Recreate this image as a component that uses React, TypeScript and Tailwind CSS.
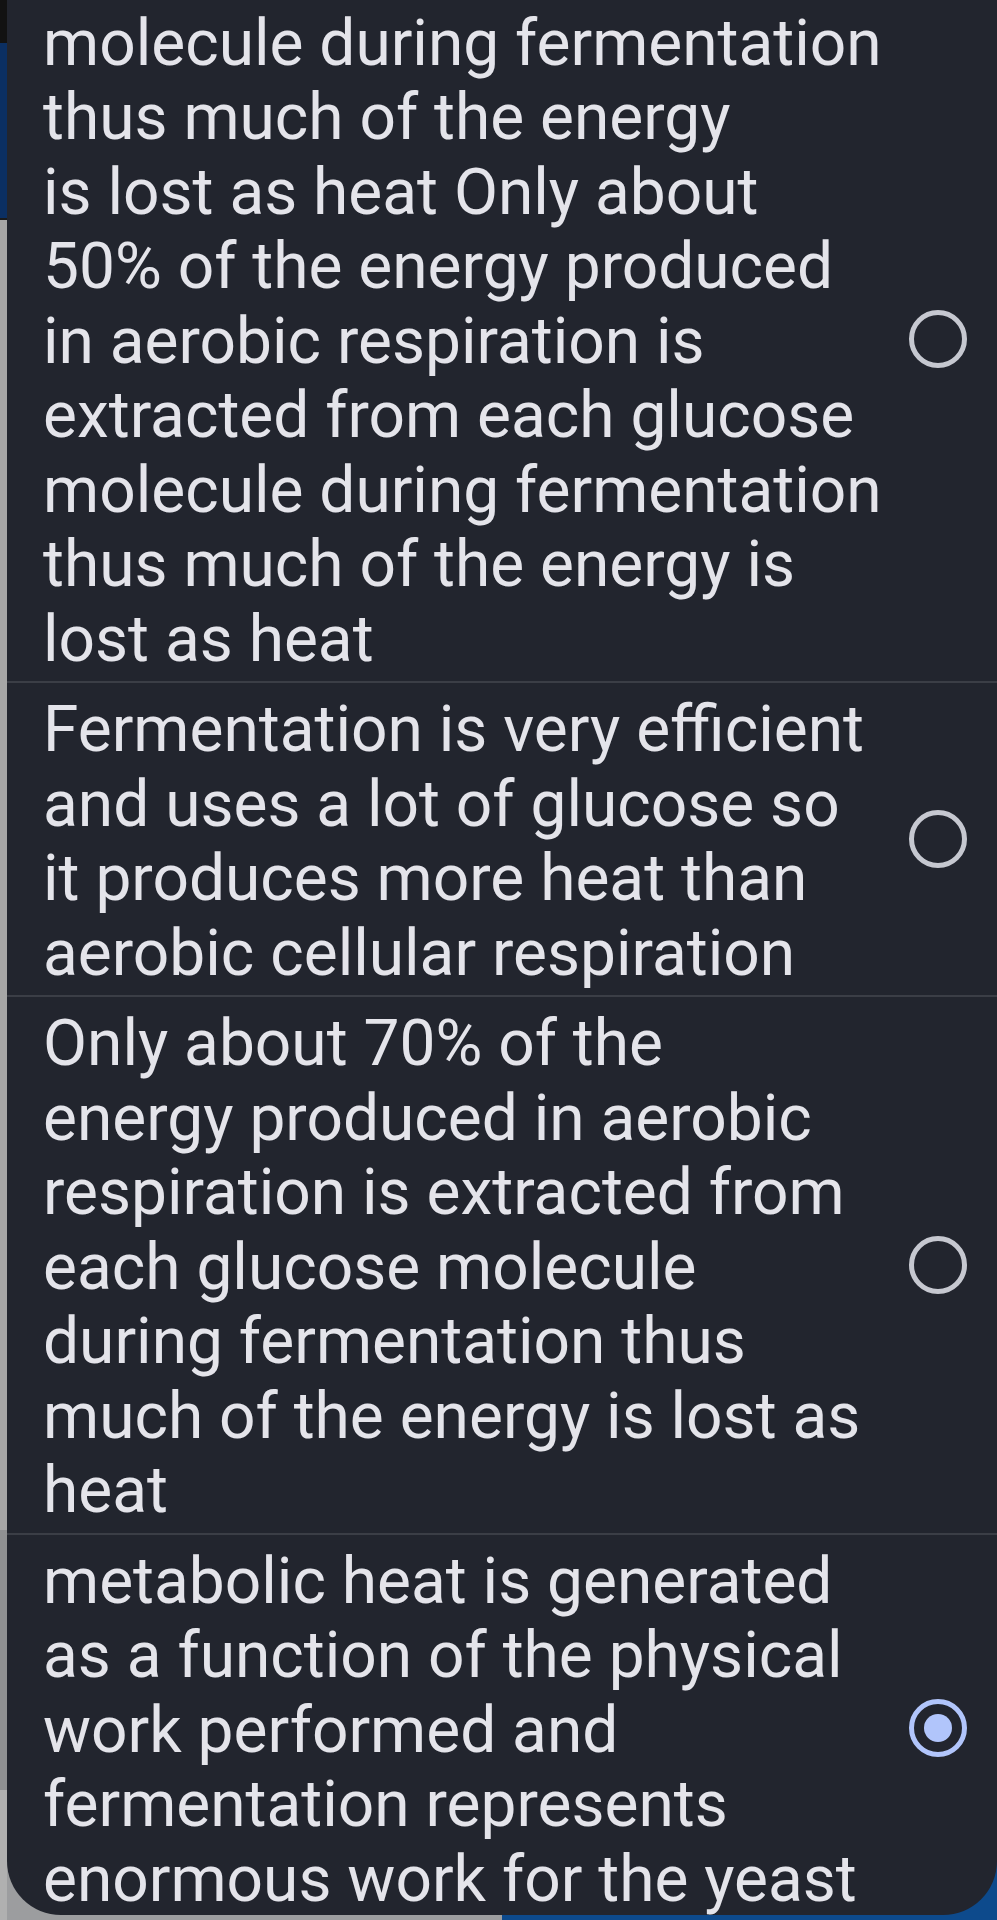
import React from "react";

// 選択肢の行（折り返しは元画像どおりに固定）
const options: { lines: string[]; selected?: boolean }[] = [
  {
    lines: [
      "molecule during fermentation",
      "thus much of the energy",
      "is lost as heat Only about",
      "50% of the energy produced",
      "in aerobic respiration is",
      "extracted from each glucose",
      "molecule during fermentation",
      "thus much of the energy is",
      "lost as heat",
    ],
  },
  {
    lines: [
      "Fermentation is very efficient",
      "and uses a lot of glucose so",
      "it produces more heat than",
      "aerobic cellular respiration",
    ],
  },
  {
    lines: [
      "Only about 70% of the",
      "energy produced in aerobic",
      "respiration is extracted from",
      "each glucose molecule",
      "during fermentation thus",
      "much of the energy is lost as",
      "heat",
    ],
  },
  {
    lines: [
      "metabolic heat is generated",
      "as a function of the physical",
      "work performed and",
      "fermentation represents",
      "enormous work for the yeast",
    ],
    selected: true,
  },
];

function Radio({ selected }: { selected?: boolean }) {
  if (selected) {
    return (
      <div className="flex h-[58px] w-[58px] shrink-0 items-center justify-center rounded-full border-[5px] border-[#b1c5fb]">
        <div className="h-[28px] w-[28px] rounded-full bg-[#b1c5fb]" />
      </div>
    );
  }
  return <div className="h-[58px] w-[58px] shrink-0 rounded-full border-[5px] border-[#c6c8d0]" />;
}

export default function App() {
  return (
    <div className="flex h-[1920px] w-full overflow-hidden bg-[#9c9d9f] font-['Roboto','Noto_Sans',sans-serif]">
      {/* 左端にのぞく背景 */}
      <div className="flex w-[7px] shrink-0 flex-col">
        <div className="h-[43px] bg-[#121212]" />
        <div className="h-[175px] bg-[#0b2f62]" />
        <div className="h-[2px] bg-[#1a1a1a]" />
        <div className="h-[1310px] bg-[#a6a6a6]" />
        <div className="h-[260px] bg-[#8f9092]" />
        <div className="flex-1 bg-[#b0b0b0]" />
      </div>

      <div className="flex flex-1 flex-col bg-[linear-gradient(to_right,#9c9d9f_50%,#0d4a8c_50%)]">
        <div className="h-[1915px] overflow-hidden rounded-b-[54px] bg-[#22252e]">
          <div className="-mt-[3.5px]">
            {options.map((opt, i) => (
              <div
                key={i}
                className={`flex items-center pl-[36px] pr-[30px] ${i > 0 ? "border-t-2 border-[#3b3e46]" : ""}`}
              >
                <div className="flex-1 pt-[10px] pb-[4px] text-[64px] leading-[74.5px] text-[#e4e4ea]">
                  {opt.lines.map((line, j) => (
                    <span key={j} className="block whitespace-nowrap">
                      {line}
                    </span>
                  ))}
                </div>
                <Radio selected={opt.selected} />
              </div>
            ))}
          </div>
        </div>
      </div>
    </div>
  );
}
